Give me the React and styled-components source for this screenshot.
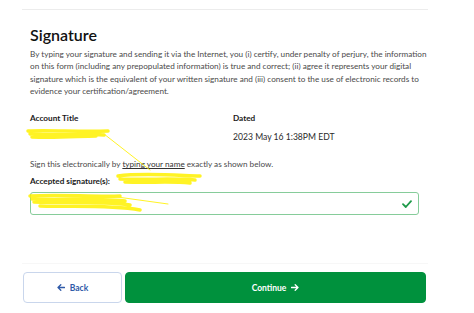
import React from "react";
import styled, { createGlobalStyle } from "styled-components";

const Global = createGlobalStyle`
  html, body { margin: 0; padding: 0; background: #fff; }
  body { font-family: "Lato", "Open Sans", sans-serif; color: #1d1d1d; }
`;

const Page = styled.div`
  position: relative;
  width: 474px;
  height: 313px;
  overflow: hidden;
  padding-top: 9px;
  box-sizing: border-box;
`;

const Frame = styled.div`
  margin-left: 22px;
  width: 406px;
`;

const Rule = styled.div`
  height: 1px;
  background: #ececec;
`;

const Section = styled.section`
  padding: 0 9px 0 8px;
`;

const Title = styled.h1`
  margin: 15px 0 0;
  font-size: 16px;
  line-height: 20px;
  font-weight: 600;
  color: #111;
`;

const Para = styled.p`
  margin: 3px 0 0;
  font-size: 8.2px;
  line-height: 12.3px;
  color: #4a4a4a;
  white-space: nowrap;
`;

const InfoGrid = styled.div`
  display: grid;
  grid-template-columns: 203px 1fr;
  row-gap: 8px;
  margin-top: 16px;
`;

const Label = styled.div`
  font-size: 8.2px;
  line-height: 11px;
  font-weight: 700;
  color: #1a1a1a;
`;

const Value = styled.div`
  font-size: 8.6px;
  line-height: 11px;
  color: #2a2a2a;
  min-height: 11px;
`;

const Hint = styled.p`
  margin: 16px 0 0;
  font-size: 8.2px;
  line-height: 11px;
  color: #4a4a4a;
`;

const Link = styled.span`
  text-decoration: underline;
  color: #333;
`;

const Accepted = styled.div`
  margin-top: 6px;
  font-size: 8.2px;
  line-height: 11px;
  font-weight: 700;
  color: #1a1a1a;
`;

const InputBox = styled.div`
  margin-top: 5px;
  height: 23px;
  box-sizing: border-box;
  border: 1px solid #86cc9a;
  border-radius: 3px;
  display: flex;
  align-items: center;
  justify-content: flex-end;
  padding-right: 6px;
`;

const Divider = styled.div`
  margin-top: 48px;
  height: 1px;
  background: #f7f7f7;
`;

const Actions = styled.div`
  display: flex;
  gap: 3px;
  margin-top: 8px;
  margin-left: 1px;
  margin-right: 2px;
`;

const Button = styled.button`
  height: 31px;
  border-radius: 4px;
  font-family: "Lato", sans-serif;
  font-size: 8.5px;
  font-weight: 700;
  display: flex;
  align-items: center;
  justify-content: center;
  gap: 5px;
  cursor: pointer;
  padding: 0;
  border: 1px solid ${(p) => (p.$primary ? "#00913d" : "#c9d6ec")};
  background: ${(p) => (p.$primary ? "#00913d" : "#fff")};
  color: ${(p) => (p.$primary ? "#fff" : "#2f5aa8")};
  width: ${(p) => (p.$primary ? "auto" : "99px")};
  flex: ${(p) => (p.$primary ? "1" : "none")};
`;

const Scribble = styled.svg`
  position: absolute;
  left: 0;
  top: 0;
  pointer-events: none;
`;

const Check = () => (
  <svg width="10" height="8" viewBox="0 0 10 8">
    <path d="M1 4.2 L3.8 7 L9 1.2" fill="none" stroke="#1f9a4a" strokeWidth="1.8" strokeLinecap="round" strokeLinejoin="round" />
  </svg>
);

const Arrow = ({ left }) => (
  <svg width="8" height="7" viewBox="0 0 8 7" style={{ transform: left ? "scaleX(-1)" : "none" }}>
    <path d="M0.5 3.5 H7 M4.2 0.8 L7 3.5 L4.2 6.2" fill="none" stroke="currentColor" strokeWidth="1.3" strokeLinecap="round" strokeLinejoin="round" />
  </svg>
);

export default function App() {
  return (
    <Page>
      <Global />
      <Frame>
        <Rule />
        <Section>
          <Title>Signature</Title>
          <Para>
            By typing your signature and sending it via the Internet, you (i) certify, under penalty of perjury, the information
            <br />
            on this form (including any prepopulated information) is true and correct; (ii) agree it represents your digital
            <br />
            signature which is the equivalent of your written signature and (iii) consent to the use of electronic records to
            <br />
            evidence your certification/agreement.
          </Para>
          <InfoGrid>
            <Label>Account Title</Label>
            <Label>Dated</Label>
            <Value></Value>
            <Value>2023 May 16 1:38PM EDT</Value>
          </InfoGrid>
          <Hint>
            Sign this electronically by <Link>typing your name</Link> exactly as shown below.
          </Hint>
          <Accepted>Accepted signature(s):</Accepted>
          <InputBox>
            <Check />
          </InputBox>
        </Section>
        <Divider />
        <Actions>
          <Button>
            <Arrow left /> Back
          </Button>
          <Button $primary>
            Continue <Arrow />
          </Button>
        </Actions>
      </Frame>
      <Scribble width="474" height="313" viewBox="0 0 474 313">
        <g fill="none" stroke="#fff200" strokeLinecap="round" strokeLinejoin="round" opacity="0.85">
          <path d="M28 131 C50 130 80 132 108 131 M30 134 C55 136 80 133 104 135 M32 137 C60 138 80 136 96 136" strokeWidth="3.5" />
          <path d="M104 134 L150 170" strokeWidth="1" />
          <path d="M118 176 C140 173 170 175 200 176 M120 179 C150 180 175 178 195 180 M125 182 C150 183 170 181 190 183" strokeWidth="3.5" />
          <path d="M30 196 C60 194 90 197 120 196 M32 199 C60 200 95 198 125 201 M34 202 C70 203 100 201 130 205 M40 206 C80 207 110 205 140 210" strokeWidth="3.5" />
          <path d="M110 196 L168 204" strokeWidth="1" />
        </g>
      </Scribble>
    </Page>
  );
}
